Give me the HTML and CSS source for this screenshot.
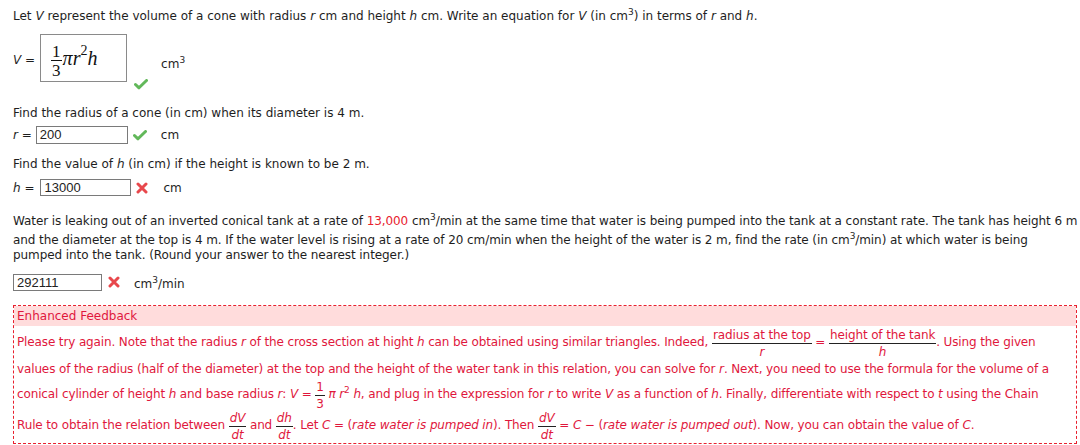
FILE: index.html
```html
<!DOCTYPE html>
<html>
<head>
<meta charset="utf-8">
<link rel="stylesheet" href="styles.css">
</head>
<body>
<div class="page">
  <p class="txt first">Let <i>V</i> represent the volume of a cone with radius <i>r</i> cm and height <i>h</i> cm. Write an equation for <i>V</i> (in cm<sup>3</sup>) in terms of <i>r</i> and <i>h</i>.</p>

  <div class="row row-eq">
    <span class="lbl lbl-eq"><i>V</i> =</span>
    <div class="mathbox"><span class="mfrac"><span class="mnum">1</span><span class="mden">3</span></span><span class="mi">π</span><span class="mi">r</span><span class="msup">2</span><span class="mi">h</span></div>
    <span class="mark mark-low"><svg width="14" height="11" viewBox="0 0 14 11"><path d="M1.5 5.5 L5 8.8 L12.5 1.5" fill="none" stroke="#62b85a" stroke-width="3" stroke-linecap="round" stroke-linejoin="round"/></svg></span>
    <span class="unit unit-eq">cm<sup>3</sup></span>
  </div>

  <p class="txt q2">Find the radius of a cone (in cm) when its diameter is 4 m.</p>
  <div class="row row-r">
    <span class="lbl"><i>r</i> =</span>
    <span class="inp inp-r">200</span>
    <span class="mark"><svg width="14" height="11" viewBox="0 0 14 11"><path d="M1.5 5.5 L5 8.8 L12.5 1.5" fill="none" stroke="#62b85a" stroke-width="3" stroke-linecap="round" stroke-linejoin="round"/></svg></span>
    <span class="unit unit-r">cm</span>
  </div>

  <p class="txt q3">Find the value of <i>h</i> (in cm) if the height is known to be 2 m.</p>
  <div class="row row-h">
    <span class="lbl"><i>h</i> =</span>
    <span class="inp inp-h">13000</span>
    <span class="mark"><svg width="12" height="12" viewBox="0 0 12 12"><path d="M2 2 L10 10 M10 2 L2 10" fill="none" stroke="#e8484c" stroke-width="3" stroke-linecap="round"/></svg></span>
    <span class="unit unit-h">cm</span>
  </div>

  <p class="txt para">Water is leaking out of an inverted conical tank at a rate of <span class="red">13,000</span> cm<sup>3</sup>/min at the same time that water is being pumped into the tank at a constant rate. The tank has height 6 m<br>and the diameter at the top is 4 m. If the water level is rising at a rate of 20 cm/min when the height of the water is 2 m, find the rate (in cm<sup>3</sup>/min) at which water is being<br>pumped into the tank. (Round your answer to the nearest integer.)</p>

  <div class="row row-ans">
    <span class="inp inp-ans">292111</span>
    <span class="mark"><svg width="12" height="12" viewBox="0 0 12 12"><path d="M2 2 L10 10 M10 2 L2 10" fill="none" stroke="#e8484c" stroke-width="3" stroke-linecap="round"/></svg></span>
    <span class="unit unit-ans">cm<sup>3</sup>/min</span>
  </div>

  <div class="feedback">
    <div class="fb-head">Enhanced Feedback</div>
    <div class="fb-body">Please try again. Note that the radius <i>r</i> of the cross section at hight <i>h</i> can be obtained using similar triangles. Indeed, <span class="frac"><span class="num">radius at the top</span><span class="den"><i>r</i></span></span> = <span class="frac"><span class="num">height of the tank</span><span class="den"><i>h</i></span></span>. Using the given<br>values of the radius (half of the diameter) at the top and the height of the water tank in this relation, you can solve for <i>r</i>. Next, you need to use the formula for the volume of a<br>conical cylinder of height <i>h</i> and base radius <i>r</i>: <i>V</i> = <span class="frac"><span class="num">1</span><span class="den">3</span></span> <i>π</i> <i>r</i><sup>2</sup> <i>h</i>, and plug in the expression for <i>r</i> to write <i>V</i> as a function of <i>h</i>. Finally, differentiate with respect to <i>t</i> using the Chain<br>Rule to obtain the relation between <span class="frac dfrac"><span class="num"><i>dV</i></span><span class="den"><i>dt</i></span></span> and <span class="frac dfrac"><span class="num"><i>dh</i></span><span class="den"><i>dt</i></span></span>. Let <i>C</i> = (<i>rate water is pumped in</i>). Then <span class="frac dfrac"><span class="num"><i>dV</i></span><span class="den"><i>dt</i></span></span> = <i>C</i> − (<i>rate water is pumped out</i>). Now, you can obtain the value of <i>C</i>.</div>
  </div>
</div>
</body>
</html>
```

FILE: styles.css
```css
html, body {
  margin: 0;
  padding: 0;
  background: #ffffff;
}

body {
  font-family: "DejaVu Sans", Verdana, sans-serif;
  font-size: 12px;
  color: #1e1e1e;
  overflow: hidden;
}

.page {
  padding: 5px 3px 0 13px;
}

.txt {
  margin: 0;
  line-height: 15px;
  white-space: nowrap;
}

sup {
  font-size: 9px;
  vertical-align: 5px;
}

.row {
  display: flex;
  align-items: center;
}

.row-eq {
  margin-top: 10px;
  align-items: flex-start;
}

.lbl {
  line-height: 16px;
}

.lbl-eq {
  margin-top: 18px;
  margin-right: 5px;
}

.mathbox {
  box-sizing: border-box;
  width: 87px;
  height: 48px;
  border: 1px solid #8a8a8a;
  padding: 9px 0 0 10px;
  font-family: "Liberation Serif", "Times New Roman", serif;
  color: #111111;
  font-size: 20px;
  line-height: 19px;
  white-space: nowrap;
}

.mfrac {
  display: inline-flex;
  flex-direction: column;
  align-items: stretch;
  text-align: center;
  font-size: 17px;
  line-height: 15px;
  vertical-align: 8px;
  margin-right: 1px;
}

.mnum {
  padding: 0 1px 1px;
}

.mden {
  border-top: 1px solid #111111;
  padding-top: 2px;
}

.mi {
  font-style: italic;
}

.msup {
  font-size: 14px;
  line-height: 14px;
  vertical-align: 10px;
}

.mark {
  display: inline-flex;
  align-items: center;
}

.mark-low {
  margin-top: 45px;
  margin-left: 7px;
}

.unit {
  line-height: 16px;
}

.unit-eq {
  margin-top: 18px;
  margin-left: 13px;
}

.q2 {
  margin-top: 16px;
}

.row-r {
  margin-top: 5px;
}

.row-r .lbl {
  margin-right: 4px;
}

.inp {
  box-sizing: border-box;
  display: inline-block;
  border: 1px solid #7a7a7a;
  font-family: "Liberation Sans", Arial, sans-serif;
  font-size: 13px;
  color: #222222;
  padding-left: 3px;
}

.inp-r {
  width: 92px;
  height: 18px;
  line-height: 16px;
}

.row-r .mark {
  margin-left: 5px;
}

.unit-r {
  margin-left: 14px;
}

.q3 {
  margin-top: 13px;
}

.row-h {
  margin-top: 7px;
}

.row-h .lbl {
  margin-right: 6px;
}

.inp-h {
  width: 91px;
  height: 17px;
  line-height: 15px;
}

.row-h .mark {
  margin-left: 5px;
}

.unit-h {
  margin-left: 15px;
}

.para {
  margin-top: 14px;
  letter-spacing: -0.08px;
}

.red {
  color: #e8222e;
}

.row-ans {
  margin-top: 9px;
}

.inp-ans {
  width: 89px;
  height: 17px;
  line-height: 15px;
}

.row-ans .mark {
  margin-left: 6px;
}

.unit-ans {
  margin-left: 14px;
}

.feedback {
  margin-top: 13px;
  border: 1px dashed #e8202e;
  color: #e0173c;
}

.fb-head {
  background: #ffdcdc;
  height: 20px;
  line-height: 20px;
  padding-left: 3px;
}

.fb-body {
  padding: 3px 0 1px 3px;
  line-height: 21px;
  white-space: nowrap;
  letter-spacing: -0.13px;
}

.frac {
  display: inline-flex;
  flex-direction: column;
  align-items: stretch;
  text-align: center;
  vertical-align: 7px;
  line-height: 13px;
}

.frac .num {
  padding: 0 1px;
}

.frac .den {
  border-top: 1px solid #222222;
  margin-top: 1px;
  padding-top: 2px;
}

.dfrac {
  padding-top: 1px;
}
```
